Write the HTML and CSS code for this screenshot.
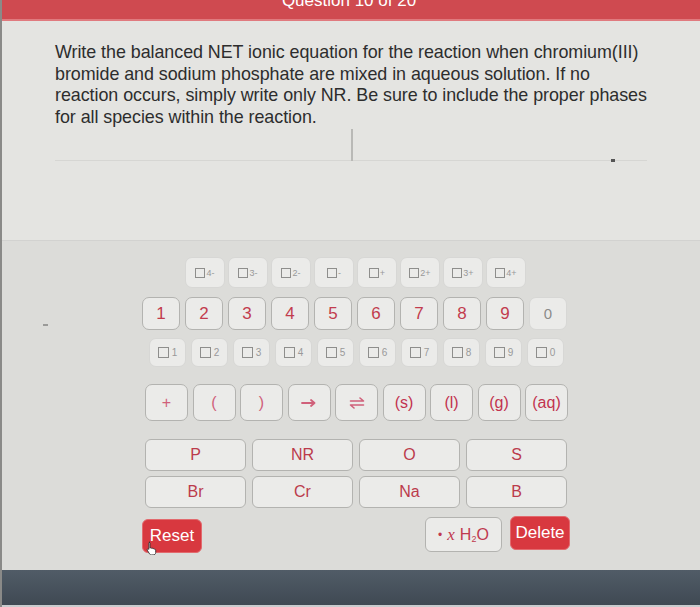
FILE: index.html
```html
<!DOCTYPE html>
<html>
<head>
<meta charset="utf-8">
<link rel="stylesheet" href="styles.css">
</head>
<body>
<div class="screen">
  <div class="topbar"><span class="qtitle">Question 10 of 20</span></div>
  <div class="upper">
    <p class="question">Write the balanced NET ionic equation for the reaction when chromium(III) bromide and sodium phosphate are mixed in aqueous solution. If no reaction occurs, simply write only NR. Be sure to include the proper phases for all species within the reaction.</p>
    <div class="answer"><span class="caret"></span><span class="dot"></span></div>
  </div>
  <div class="keypad">
    <span class="speck"></span>
    <div class="row sup">
      <button class="key soft"><span class="box"></span><sup>4-</sup></button>
      <button class="key soft"><span class="box"></span><sup>3-</sup></button>
      <button class="key soft"><span class="box"></span><sup>2-</sup></button>
      <button class="key soft"><span class="box"></span><sup>-</sup></button>
      <button class="key soft"><span class="box"></span><sup>+</sup></button>
      <button class="key soft"><span class="box"></span><sup>2+</sup></button>
      <button class="key soft"><span class="box"></span><sup>3+</sup></button>
      <button class="key soft"><span class="box"></span><sup>4+</sup></button>
    </div>
    <div class="row nums">
      <button class="key hard">1</button>
      <button class="key hard">2</button>
      <button class="key hard">3</button>
      <button class="key hard">4</button>
      <button class="key hard">5</button>
      <button class="key hard">6</button>
      <button class="key hard">7</button>
      <button class="key hard">8</button>
      <button class="key hard">9</button>
      <button class="key soft zero">0</button>
    </div>
    <div class="row subs">
      <button class="key soft"><span class="box"></span><sub>1</sub></button>
      <button class="key soft"><span class="box"></span><sub>2</sub></button>
      <button class="key soft"><span class="box"></span><sub>3</sub></button>
      <button class="key soft"><span class="box"></span><sub>4</sub></button>
      <button class="key soft"><span class="box"></span><sub>5</sub></button>
      <button class="key soft"><span class="box"></span><sub>6</sub></button>
      <button class="key soft"><span class="box"></span><sub>7</sub></button>
      <button class="key soft"><span class="box"></span><sub>8</sub></button>
      <button class="key soft"><span class="box"></span><sub>9</sub></button>
      <button class="key soft"><span class="box"></span><sub>0</sub></button>
    </div>
    <div class="row syms">
      <button class="key hard pink">+</button>
      <button class="key hard pink">(</button>
      <button class="key hard pink">)</button>
      <button class="key hard pink" aria-label="→"><svg width="16" height="10" viewBox="0 0 16 10"><path d="M1 5h12.5M10 2l3.5 3L10 8" fill="none" stroke="#d0607a" stroke-width="1.8" stroke-linecap="round" stroke-linejoin="round"/></svg></button>
      <button class="key hard pink" aria-label="⇌"><svg width="16" height="12" viewBox="0 0 16 12"><path d="M1.5 4h13l-3.5-3M14.5 8h-13l3.5 3" fill="none" stroke="#d0607a" stroke-width="1.6" stroke-linecap="round" stroke-linejoin="round"/></svg></button>
      <button class="key hard phase">(s)</button>
      <button class="key hard phase">(l)</button>
      <button class="key hard phase">(g)</button>
      <button class="key hard phase">(aq)</button>
    </div>
    <div class="row elems">
      <button class="key hard el">P</button>
      <button class="key hard el">NR</button>
      <button class="key hard el">O</button>
      <button class="key hard el">S</button>
    </div>
    <div class="row elems second">
      <button class="key hard el">Br</button>
      <button class="key hard el">Cr</button>
      <button class="key hard el">Na</button>
      <button class="key hard el">B</button>
    </div>
    <div class="row actions">
      <button class="btn red reset">Reset
        <svg class="hand" width="12" height="14" viewBox="0 0 12 14"><path d="M3 1.2c.6 0 1 .4 1 1V7l.6-.2c.6-.2 1 .2 1.1.6.5-.4 1.2-.2 1.4.3.5-.3 1.2 0 1.3.5.6-.2 1.3.2 1.3.9v2.4c0 1.5-1.1 2.4-2.6 2.4H5.3c-.8 0-1.4-.4-1.8-1L1.3 9.2c-.3-.5 0-1.1.6-1.2.4-.1.7.1 1 .4V2.2c0-.6.4-1 1-1z" fill="#fff" stroke="#333" stroke-width=".9"/></svg>
      </button>
      <span class="spacer"></span>
      <button class="btn water"><span class="bullet">•</span><i>x</i>H<sub>2</sub>O</button>
      <button class="btn red delete">Delete</button>
    </div>
  </div>
  <div class="bottombar"></div>
</div>
</body>
</html>
```

FILE: styles.css
```css
* { box-sizing: border-box; }
html, body { margin: 0; padding: 0; }
body {
  width: 700px;
  height: 607px;
  overflow: hidden;
  font-family: "Liberation Sans", Arial, sans-serif;
  background: #dcdcda;
}
.screen {
  display: flex;
  flex-direction: column;
  height: 607px;
  border-left: 2px solid #8a8a88;
}
.topbar {
  height: 21px;
  background: #cf4a50;
  overflow: hidden;
  text-align: center;
  border-bottom: 2px solid #e07a7e;
}
.qtitle {
  display: block;
  color: #fff;
  font-size: 17px;
  line-height: 17px;
  margin-top: -8px;
  margin-left: -4px;
}
.upper {
  background: #e4e4e1;
  height: 220px;
  padding: 21px 0 0 53px;
  border-bottom: 1px solid #d2d2d0;
}
.question {
  margin: 0;
  width: 600px;
  font-size: 17.9px;
  line-height: 21.6px;
  letter-spacing: -0.05px;
  color: #2d2d2d;
}
.answer {
  position: relative;
  width: 592px;
  height: 32px;
  margin-top: 1px;
  border-bottom: 1px solid #d6d6d3;
}
.caret {
  position: absolute;
  left: 296px;
  top: 0;
  width: 2px;
  height: 32px;
  background: #b9b9b6;
}
.dot {
  position: absolute;
  left: 556px;
  top: 30px;
  width: 4px;
  height: 3px;
  background: #555;
}
.keypad {
  position: relative;
  flex: 1;
  background: #dcdcd9;
  padding: 16px 0 0 140px;
}
.speck {
  position: absolute;
  left: 41px;
  top: 83px;
  width: 5px;
  height: 2px;
  background: #9a9a98;
}
.row {
  display: grid;
  width: 425px;
}
.key {
  font-family: "Liberation Sans", Arial, sans-serif;
  padding: 0;
  background: #ebebe9;
  border-radius: 7px;
  display: flex;
  align-items: center;
  justify-content: center;
}
.soft {
  border: 1px solid #d7d7d5;
  color: #999;
}
.hard {
  border: 1.5px solid #b3b3b0;
  color: #c23c4e;
}
.sup {
  grid-template-columns: repeat(8, 40px);
  gap: 3px;
  margin-left: 43px;
  height: 31px;
}
.sup .key { font-size: 11px; }
.box {
  display: inline-block;
  width: 10px;
  height: 10px;
  border: 1px solid #8e8e8c;
  margin-right: 1px;
}
sup { font-size: 9px; vertical-align: 5px; }
.subs sub { font-size: 10px; vertical-align: -5px; margin-left: 2px; }
.nums {
  grid-template-columns: repeat(10, 38px);
  gap: 5px;
  height: 33px;
  margin-top: 9px;
}
.nums .key { font-size: 17px; }
.zero { color: #8c8c8a; font-size: 15px !important; }
.subs {
  grid-template-columns: repeat(10, 37px);
  gap: 5px;
  margin-left: 7px;
  width: 420px;
  height: 29px;
  margin-top: 8px;
}
.subs .box { width: 11px; height: 11px; }
.syms {
  grid-template-columns: repeat(9, 43px);
  gap: 4.5px;
  margin-left: 3px;
  height: 37px;
  margin-top: 17px;
}
.pink { color: #d0607a; font-size: 16px; }
.phase { color: #c2334f; font-size: 16px; }
.elems {
  grid-template-columns: repeat(4, 101px);
  gap: 6px;
  margin-left: 3px;
  height: 32px;
  margin-top: 18px;
}
.elems.second { margin-top: 5px; }
.el { font-size: 16px; border-radius: 6px; color: #bb3b4c; }
.actions {
  display: flex;
  align-items: flex-start;
  width: 428px;
  margin-top: 9px;
}
.spacer { flex: 1; }
.btn {
  font-family: "Liberation Sans", Arial, sans-serif;
  padding: 0;
  border-radius: 6px;
  display: flex;
  align-items: center;
  justify-content: center;
}
.red {
  background: #d8383f;
  color: #fff;
  border: 1px solid #e26a6e;
  font-size: 17px;
}
.reset {
  position: relative;
  width: 60px;
  height: 34px;
  margin-top: 2px;
}
.hand {
  position: absolute;
  left: 3px;
  top: 21px;
}
.water {
  width: 77px;
  height: 35px;
  background: #ebebe9;
  border: 1.5px solid #b3b3b0;
  color: #c0394f;
  font-size: 16px;
  margin-right: 8px;
}
.bullet { font-size: 12px; margin-right: 5px; }
.water i { font-family: "Liberation Serif", serif; font-size: 17px; margin-right: 5px; }
.water sub { font-size: 9px; position: relative; top: 4px; vertical-align: baseline; }
.delete {
  width: 60px;
  height: 34px;
  margin-top: -1px;
}
.bottombar {
  height: 37px;
  background: linear-gradient(#515c67, #3f4953);
  border-bottom: 2px solid #c9ccce;
}
```
